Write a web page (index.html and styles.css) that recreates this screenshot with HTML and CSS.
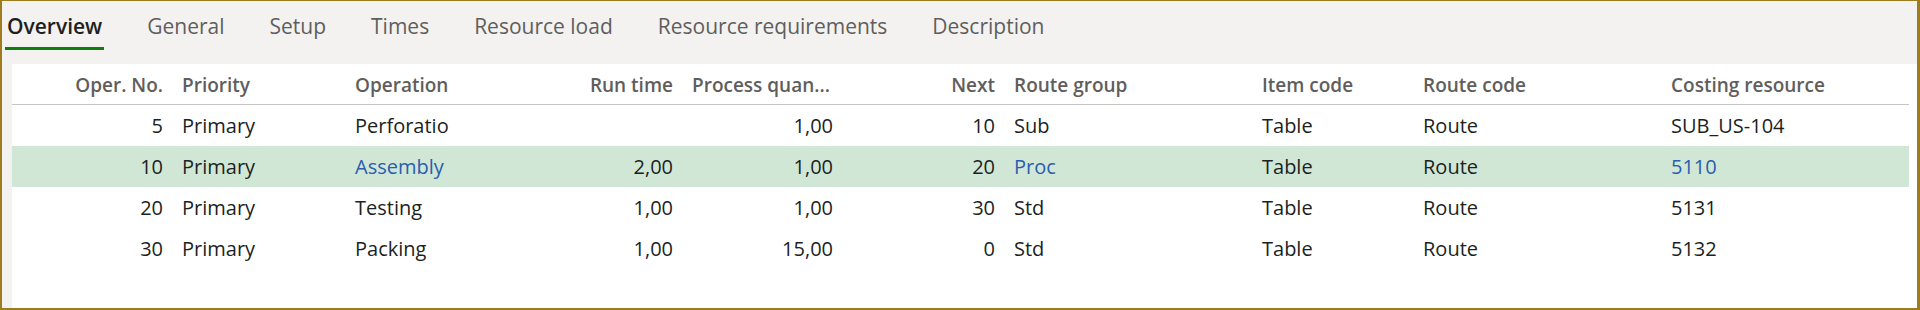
FILE: index.html
```html
<!doctype html>
<html lang="en">
<head>
    <meta charset="UTF-8">
    <title>Route operations</title>
    <link rel="stylesheet" href="styles.css">
</head>
<body>
    <div class="frame">
        <div class="tabs">
            <div class="tab selected">Overview</div>
            <div class="tab">General</div>
            <div class="tab">Setup</div>
            <div class="tab">Times</div>
            <div class="tab">Resource load</div>
            <div class="tab">Resource requirements</div>
            <div class="tab">Description</div>
        </div>
        <div class="panel">
            <div class="grid-head">
                <div class="cell num">Oper. No.</div>
                <div class="cell">Priority</div>
                <div class="cell">Operation</div>
                <div class="cell num">Run time</div>
                <div class="cell">Process quan...</div>
                <div class="cell num">Next</div>
                <div class="cell">Route group</div>
                <div class="cell">Item code</div>
                <div class="cell">Route code</div>
                <div class="cell">Costing resource</div>
            </div>
            <div class="grid-row">
                <div class="cell num">5</div>
                <div class="cell">Primary</div>
                <div class="cell">Perforatio</div>
                <div class="cell num"></div>
                <div class="cell num">1,00</div>
                <div class="cell num">10</div>
                <div class="cell">Sub</div>
                <div class="cell">Table</div>
                <div class="cell">Route</div>
                <div class="cell">SUB_US-104</div>
            </div>
            <div class="grid-row selected">
                <div class="cell num">10</div>
                <div class="cell">Primary</div>
                <div class="cell link">Assembly</div>
                <div class="cell num">2,00</div>
                <div class="cell num">1,00</div>
                <div class="cell num">20</div>
                <div class="cell link">Proc</div>
                <div class="cell">Table</div>
                <div class="cell">Route</div>
                <div class="cell link">5110</div>
            </div>
            <div class="grid-row">
                <div class="cell num">20</div>
                <div class="cell">Primary</div>
                <div class="cell">Testing</div>
                <div class="cell num">1,00</div>
                <div class="cell num">1,00</div>
                <div class="cell num">30</div>
                <div class="cell">Std</div>
                <div class="cell">Table</div>
                <div class="cell">Route</div>
                <div class="cell">5131</div>
            </div>
            <div class="grid-row">
                <div class="cell num">30</div>
                <div class="cell">Primary</div>
                <div class="cell">Packing</div>
                <div class="cell num">1,00</div>
                <div class="cell num">15,00</div>
                <div class="cell num">0</div>
                <div class="cell">Std</div>
                <div class="cell">Table</div>
                <div class="cell">Route</div>
                <div class="cell">5132</div>
            </div>
        </div>
    </div>
</body>
</html>
```

FILE: styles.css
```css
*{
    margin: 0;
    padding: 0;
    box-sizing: border-box;
}
body{
    font-family: "Open Sans", "Noto Sans", sans-serif;
    background: #fff;
}
.frame{
    width: 1920px;
    height: 310px;
    border: solid #9c7c1c;
    border-width: 1px 3px 2px 2px;
    background: #f3f2f1;
    display: flex;
    flex-direction: column;
}
.tabs{
    display: flex;
    gap: 41px;
    padding: 0 3px;
    margin-bottom: 14px;
}
.tab{
    font-size: 21px;
    line-height: 28px;
    color: #605e5c;
    padding: 11px 2px 7px;
    border-bottom: 3px solid transparent;
    white-space: nowrap;
}
.tab.selected{
    color: #201f1e;
    font-weight: 600;
    border-bottom-color: #107c10;
}
.panel{
    flex: 1;
    background: #fff;
    margin-left: 10px;
}
.grid-head,
.grid-row{
    display: grid;
    grid-template-columns: 161px 173px 120px 217px 160px 162px 248px 161px 248px 247px;
    width: 1897px;
}
.grid-head{
    height: 41px;
    padding-top: 3px;
    line-height: 37px;
    font-size: 19px;
    font-weight: 600;
    color: #605e5c;
    border-bottom: 1px solid #c8c6c4;
}
.grid-row{
    height: 41px;
    line-height: 41px;
    font-size: 20px;
    color: #201f1e;
}
.grid-row.selected{
    background: #d1e7d6;
}
.cell{
    padding: 0 10px 0 9px;
    white-space: nowrap;
    overflow: hidden;
}
.num{
    text-align: right;
}
.link{
    color: #2a5db0;
}
```
